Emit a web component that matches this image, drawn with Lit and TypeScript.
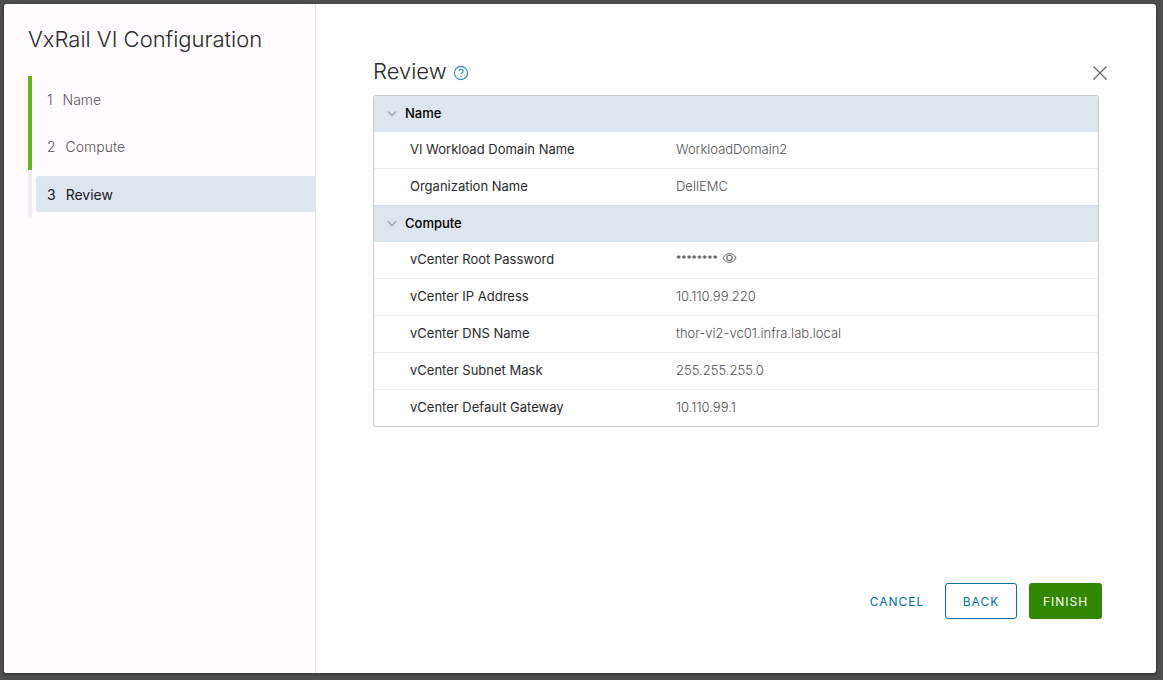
import { LitElement, html, css, svg } from "lit";
import { customElement, property, state } from "lit/decorators.js";
import { classMap } from "lit/directives/class-map.js";

interface Field {
  label: string;
  value: string;
  secret?: boolean;
}

interface Section {
  title: string;
  fields: Field[];
}

const STEPS = ["Name", "Compute", "Review"];

const SECTIONS: Section[] = [
  {
    title: "Name",
    fields: [
      { label: "VI Workload Domain Name", value: "WorkloadDomain2" },
      { label: "Organization Name", value: "DellEMC" },
    ],
  },
  {
    title: "Compute",
    fields: [
      { label: "vCenter Root Password", value: "********", secret: true },
      { label: "vCenter IP Address", value: "10.110.99.220" },
      { label: "vCenter DNS Name", value: "thor-vi2-vc01.infra.lab.local" },
      { label: "vCenter Subnet Mask", value: "255.255.255.0" },
      { label: "vCenter Default Gateway", value: "10.110.99.1" },
    ],
  },
];

const strokes = {
  caret: svg`<path d="M1 3.5 L5 7.5 L9 3.5" stroke-width="1.3" />`,
  close: svg`<path d="M0.5 0.5 L13.5 13.5 M13.5 0.5 L0.5 13.5" stroke-width="1.2" />`,
  help: svg`<circle cx="8" cy="8" r="6.6" stroke-width="1.1" />
    <path d="M5.9 6.2 C6.1 4.9 7 4.4 8 4.4 C9.2 4.4 10.1 5.1 10.1 6.2 C10.1 7.7 8 7.7 8 9.3" stroke-width="1.1" />
    <path d="M8 10.6 V11.8" stroke-width="1.2" />`,
  eye: svg`<path d="M1 5 C2.6 2 4.8 0.6 7.5 0.6 C10.2 0.6 12.4 2 14 5 C12.4 8 10.2 9.4 7.5 9.4 C4.8 9.4 2.6 8 1 5 Z" stroke-width="1" />
    <circle cx="7.5" cy="5" r="2.7" stroke-width="1.1" />`,
};

@customElement("wizard-steps")
export class WizardSteps extends LitElement {
  @property({ type: Array }) steps: string[] = [];
  @property({ type: Number }) current = 0;

  static styles = css`
    :host {
      display: block;
    }
    .list {
      list-style: none;
      margin: 0;
      padding: 0;
    }
    .item {
      border-left: 4px solid #eeedf0;
      padding: 6px 0 6px 4px;
    }
    .item.done {
      border-left-color: #62b515;
      padding: 6px 0 5px 4px;
    }
    .step {
      display: flex;
      align-items: center;
      gap: 10px;
      width: 100%;
      height: 36px;
      padding: 0 11px;
      border: 0;
      border-radius: 3px 0 0 3px;
      background: none;
      color: #58555a;
      font: 300 14px/20px "Inter", "Open Sans", sans-serif;
      text-align: left;
      cursor: pointer;
    }
    .current {
      padding-top: 2px;
      background: #dde5ee;
      color: #202025;
      font-weight: 400;
    }
  `;

  render() {
    return html`<ol class="list">
      ${this.steps.map(
        (name, i) => html`<li class=${classMap({ item: true, done: i < this.current })}>
          <button
            class=${classMap({ step: true, current: i === this.current })}
            aria-current=${i === this.current ? "step" : "false"}
          >
            <span>${i + 1}</span><span>${name}</span>
          </button>
        </li>`,
      )}
    </ol>`;
  }
}

@customElement("review-section")
export class ReviewSection extends LitElement {
  @property({ type: Object }) section!: Section;
  @state() private open = true;

  static styles = css`
    :host {
      display: block;
      font-family: "Inter", "Open Sans", sans-serif;
      font-size: 13px;
      line-height: 20px;
    }
    svg {
      display: block;
      fill: none;
      stroke: currentColor;
    }
    .heading {
      margin: 0;
      font-size: inherit;
    }
    .toggle {
      display: flex;
      align-items: center;
      gap: 8px;
      width: 100%;
      height: 36px;
      padding: 0 13px 2px;
      border: 0;
      background: #dde5ee;
      color: #000;
      font: inherit;
      font-weight: 500;
      cursor: pointer;
    }
    .caret {
      color: #9aa1a8;
    }
    .fields {
      margin: 0;
    }
    .field {
      display: grid;
      grid-template-columns: 266px 1fr;
      padding: 7px 0 9px 36px;
      border-bottom: 1px solid #ececec;
    }
    .field:last-child {
      border-bottom: 0;
    }
    .label {
      color: #2a2a2a;
    }
    .value {
      display: flex;
      align-items: center;
      gap: 4px;
      margin: 0;
      color: #505050;
      font-weight: 300;
    }
    .secret {
      font-size: 10px;
      font-weight: 500;
    }
    .reveal {
      padding: 0 0 2px;
      border: 0;
      background: none;
      color: #666;
      cursor: pointer;
    }
  `;

  render() {
    return html`<h3 class="heading">
        <button class="toggle" aria-expanded=${this.open} @click=${() => (this.open = !this.open)}>
          <svg class="caret" width="10" height="10" viewBox="0 0 10 10">${strokes.caret}</svg>
          ${this.section.title}
        </button>
      </h3>
      ${this.open
        ? html`<dl class="fields">
            ${this.section.fields.map(
              (f) => html`<div class="field">
                <dt class="label">${f.label}</dt>
                <dd class="value">
                  <span class=${classMap({ secret: !!f.secret })}>${f.value}</span>
                  ${f.secret
                    ? html`<button class="reveal" aria-label="Show password">
                        <svg width="15" height="10" viewBox="0 0 15 10">${strokes.eye}</svg>
                      </button>`
                    : null}
                </dd>
              </div>`,
            )}
          </dl>`
        : null}`;
  }
}

@customElement("app-root")
export class AppRoot extends LitElement {
  static styles = css`
    :host {
      display: block;
      box-sizing: border-box;
      min-height: 100vh;
      padding: 4px 7px 7px 4px;
      background: #4e4e4e;
      font-family: "Inter", "Open Sans", sans-serif;
      color: #2a2a2a;
    }
    * {
      box-sizing: border-box;
    }
    .modal {
      display: grid;
      grid-template-columns: 312px 1fr;
      min-height: calc(100vh - 11px);
      border-radius: 3px;
      overflow: hidden;
      background: #fff;
      box-shadow: 0 1px 2px 1px #3a3a3a;
    }
    .side {
      padding: 21px 0 0 24px;
      border-right: 1px solid #e6e3e8;
      background: #fffbff;
    }
    .title {
      margin: 0 0 23px;
      font-size: 22px;
      line-height: 28px;
      font-weight: 300;
    }
    .main {
      display: flex;
      flex-direction: column;
      padding: 53px 54px 54px 57px;
    }
    .header {
      display: flex;
      align-items: center;
      gap: 6px;
      margin: 0 -5px 10px 0;
    }
    .name {
      margin: 0;
      font-size: 22px;
      line-height: 28px;
      font-weight: 300;
    }
    svg {
      display: block;
      fill: none;
      stroke: currentColor;
    }
    .icon {
      padding: 4px 0 0;
      border: 0;
      background: none;
      cursor: pointer;
    }
    .help {
      color: #2b8cb8;
    }
    .close {
      margin-left: auto;
      color: #666;
    }
    .panel {
      margin-right: 3px;
      border: 1px solid #ccc;
      border-radius: 3px;
      overflow: hidden;
    }
    .section + .section {
      border-top: 1px solid #d5dde5;
    }
    .actions {
      display: flex;
      justify-content: flex-end;
      gap: 12px;
      margin-top: auto;
    }
    .btn {
      height: 36px;
      min-width: 72px;
      padding: 1px 12px 0;
      border: 1px solid transparent;
      border-radius: 3px;
      background: none;
      color: #0072a3;
      font: 400 12px/20px "Inter", "Open Sans", sans-serif;
      letter-spacing: 1px;
      text-transform: uppercase;
      cursor: pointer;
    }
    .outline {
      border-color: #0072a3;
    }
    .primary {
      min-width: 73px;
      background: #318700;
      color: #fff;
    }
    .cancel {
      padding: 1px 7px 0;
    }
  `;

  render() {
    return html`<div class="modal" role="dialog" aria-labelledby="title">
      <aside class="side">
        <h1 class="title" id="title">VxRail VI Configuration</h1>
        <wizard-steps .steps=${STEPS} .current=${2}></wizard-steps>
      </aside>
      <main class="main">
        <header class="header">
          <h2 class="name">Review</h2>
          <button class="icon help" aria-label="Help">
            <svg width="16" height="16" viewBox="0 0 16 16">${strokes.help}</svg>
          </button>
          <button class="icon close" aria-label="Close">
            <svg width="14" height="14" viewBox="0 0 14 14">${strokes.close}</svg>
          </button>
        </header>
        <div class="panel">
          ${SECTIONS.map((s) => html`<review-section class="section" .section=${s}></review-section>`)}
        </div>
        <footer class="actions">
          <button class="btn cancel">Cancel</button>
          <button class="btn outline">Back</button>
          <button class="btn primary">Finish</button>
        </footer>
      </main>
    </div>`;
  }
}
